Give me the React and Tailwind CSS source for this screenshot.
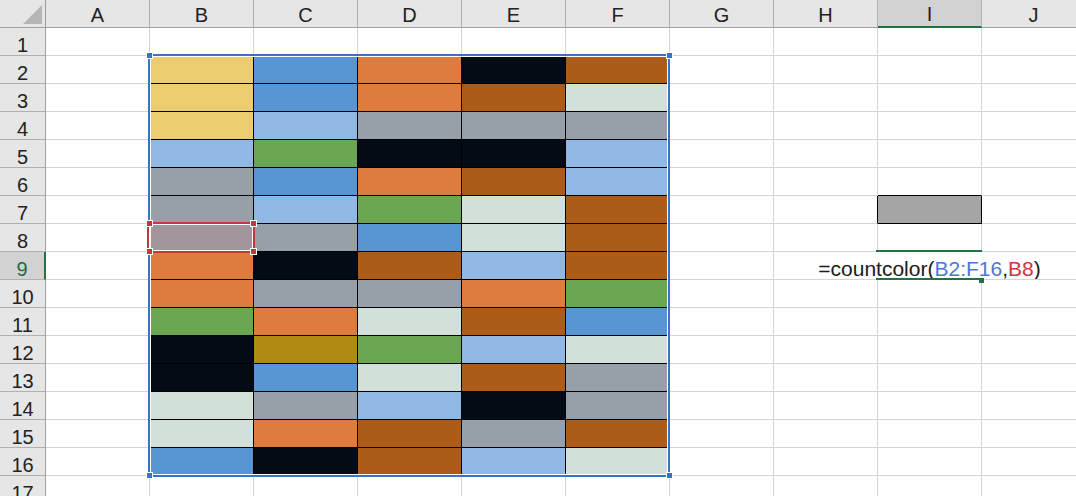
import React from "react";

const FILL = {
  Y: "bg-[#EBCD6F]",
  B: "bg-[#5795D3]",
  L: "bg-[#8FB9E4]",
  O: "bg-[#DC7C3F]",
  R: "bg-[#AD5B19]",
  K: "bg-[#040B15]",
  G: "bg-[#979FA9]",
  M: "bg-[#D2E1D7]",
  N: "bg-[#6AA654]",
  P: "bg-[#A2959C]",
  V: "bg-[#B08A13]",
  S: "bg-[#A5A5A5]",
};

// rows 2..16, columns B..F
const DATA = [
  "YBOKR",
  "YBORM",
  "YLGGG",
  "LNKKL",
  "GBORL",
  "GLNMR",
  "PGBMR",
  "OKRLR",
  "OGGON",
  "NOMRB",
  "KVNLM",
  "KBMRG",
  "MGLKG",
  "MORGR",
  "BKRLM",
];

const COLS = ["A", "B", "C", "D", "E", "F", "G", "H", "I", "J"];
const ROWS = Array.from({ length: 17 }, (_, i) => i + 1);

function fillAt(r, c) {
  if (r >= 2 && r <= 16 && c >= 1 && c <= 5) return DATA[r - 2][c - 1];
  if (r === 7 && c === 8) return "S";
  return null;
}

function Cell({ r, c }) {
  const f = fillAt(r, c);
  let right = f || fillAt(r, c + 1) ? "border-r-black" : "border-r-[#d4d4d4]";
  if (r === 9 && (c === 7 || c === 8)) right = "border-r-transparent";
  const bottom = f || fillAt(r + 1, c) ? "border-b-black" : "border-b-[#d4d4d4]";

  return (
    <div
      className={`relative w-[104px] shrink-0 border-r border-b ${right} ${bottom} ${
        f ? FILL[f] : ""
      } flex items-end justify-center`}
    >
      {r === 9 && c === 8 && (
        <span className="whitespace-nowrap text-[21px] leading-none text-[#1a1a1a]">
          =countcolor(<span className="text-[#4a78d6]">B2:F16</span>,
          <span className="text-[#d1343f]">B8</span>)
        </span>
      )}
    </div>
  );
}

function Handle({ className }) {
  return <div className={`absolute w-[7px] h-[7px] border border-white ${className}`} />;
}

export default function App() {
  return (
    <div className="relative w-[1076px] h-[496px] overflow-hidden bg-white font-['Liberation_Sans',sans-serif]">
      {/* column headers */}
      <div className="flex h-[28px]">
        <div className="w-[46px] shrink-0 bg-[#e6e6e6] border-r border-b border-[#9e9e9e] relative">
          <svg className="absolute left-0 top-0" width="46" height="28">
            <polygon points="23,24 42,24 42,5" fill="#b5b5b5" />
          </svg>
        </div>
        {COLS.map((c) => (
          <div
            key={c}
            className={`w-[104px] shrink-0 border-r border-r-[#b0b0b0] flex items-end justify-center pb-[2px] text-[20px] leading-none text-[#222] ${
              c === "I"
                ? "bg-[#d2d2d2] border-b-2 border-b-[#217346]"
                : "bg-[#e6e6e6] border-b border-b-[#9e9e9e]"
            }`}
          >
            {c}
          </div>
        ))}
      </div>

      {/* rows */}
      {ROWS.map((r) => (
        <div key={r} className="flex h-[28px]">
          <div
            className={`w-[46px] shrink-0 border-b border-b-[#b0b0b0] flex items-end justify-center text-[20px] leading-none ${
              r === 9
                ? "bg-[#d2d2d2] border-r-2 border-r-[#217346] text-[#1d6b42]"
                : "bg-[#e6e6e6] border-r border-r-[#9e9e9e] text-[#222]"
            }`}
          >
            {r}
          </div>
          {COLS.map((_, c) => (
            <Cell key={c} r={r} c={c} />
          ))}
        </div>
      ))}

      {/* range selection B2:F16 */}
      <div className="absolute left-[148px] top-[54px] w-[522px] h-[423px] border-2 border-[#3a72c6] shadow-[inset_0_0_0_1px_white]" />
      <Handle className="left-[146px] top-[52px] bg-[#3a72c6]" />
      <Handle className="left-[666px] top-[52px] bg-[#3a72c6]" />
      <Handle className="left-[146px] top-[472px] bg-[#3a72c6]" />
      <Handle className="left-[666px] top-[472px] bg-[#3a72c6]" />

      {/* reference B8 */}
      <div className="absolute left-[147px] top-[222px] w-[108px] h-[31px] border-2 border-[#c6373c] shadow-[inset_0_0_0_1px_white]" />
      <Handle className="left-[146px] top-[220px] bg-[#c6373c]" />
      <Handle className="left-[250px] top-[220px] bg-[#c6373c]" />
      <Handle className="left-[146px] top-[248px] bg-[#c6373c]" />
      <Handle className="left-[250px] top-[248px] bg-[#c6373c]" />

      {/* active cell I9 */}
      <div className="absolute left-[876px] top-[250px] w-[106px] h-[2px] bg-[#217346]" />
      <div className="absolute left-[876px] top-[278px] w-[104px] h-[2px] bg-[#217346]" />
      <div className="absolute left-[979px] top-[278px] w-[5px] h-[5px] bg-[#217346]" />
    </div>
  );
}
